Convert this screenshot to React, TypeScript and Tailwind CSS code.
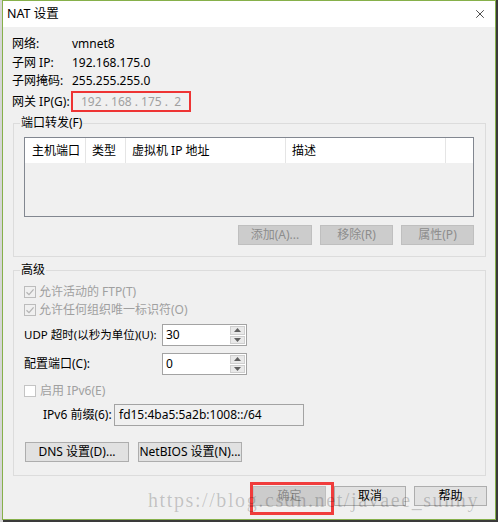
import { X } from "lucide-react";

const font = { fontFamily: '"Noto Sans", "Noto Sans CJK SC", sans-serif' };

function CheckBox({ checked }: { checked?: boolean }) {
  return (
    <span
      className={`w-[12px] h-[12px] border flex items-center justify-center shrink-0 ${
        checked ? "border-[#bcbcbc] bg-[#f0f0f0]" : "border-[#c4c4c4] bg-white"
      }`}
    >
      {checked && (
        <svg width="10" height="10" viewBox="0 0 10 10">
          <path d="M1.5 5.2 L4 7.6 L8.6 2.4" fill="none" stroke="#b4b4b4" strokeWidth="1.3" />
        </svg>
      )}
    </span>
  );
}

function Spin({ value }: { value: string }) {
  return (
    <div className="w-[85px] h-[22px] border border-[#a3a3a3] bg-white flex shrink-0">
      <div className="flex-1 pl-[3px] flex items-center text-black">{value}</div>
      <div className="w-[16px] flex flex-col gap-[1px] p-[1px] pl-0">
        {[0, 1].map((i) => (
          <div
            key={i}
            className="flex-1 bg-[#e9e9e9] border border-[#cfcfcf] flex items-center justify-center"
          >
            <svg width="7" height="4" viewBox="0 0 7 4">
              <path d={i === 0 ? "M0 4 L3.5 0 L7 4 Z" : "M0 0 L3.5 4 L7 0 Z"} fill="#606060" />
            </svg>
          </div>
        ))}
      </div>
    </div>
  );
}

function Btn({
  label,
  disabled,
  w = "w-[73px]",
}: {
  label: string;
  disabled?: boolean;
  w?: string;
}) {
  return (
    <div
      className={`${w} h-[20px] border flex items-center justify-center whitespace-nowrap ${
        disabled
          ? "bg-[#cccccc] border-[#bfbfbf] text-[#8d8d8d]"
          : "bg-[#e1e1e1] border-[#adadad] text-black"
      }`}
    >
      {label}
    </div>
  );
}

export default function App() {
  return (
    <div
      className="w-[498px] h-[522px] bg-[#3a3a3a] relative overflow-hidden text-[12px] leading-none text-black"
      style={font}
    >
      <div className="absolute left-0 top-0 w-[3px] h-[522px] bg-[#d6d6d6]" />
      <div className="relative ml-[2px] w-[494px] h-[520px] border border-[#86b04a] flex flex-col bg-[#f0f0f0]">
        {/* title bar */}
        <div className="h-[26px] bg-white flex items-center justify-between pl-[4px] pr-[8px] shrink-0">
          <span className="text-[12.5px]">NAT 设置</span>
          <X className="w-[14px] h-[14px]" strokeWidth={1.2} />
        </div>

        {/* info */}
        <div className="pl-[9px] pt-[7px] flex flex-col">
          <div className="h-[19px] flex items-center">
            <span className="w-[60px]">网络:</span>
            <span>vmnet8</span>
          </div>
          <div className="h-[19px] flex items-center">
            <span className="w-[60px]">子网 IP:</span>
            <span>192.168.175.0</span>
          </div>
          <div className="h-[18px] flex items-center">
            <span className="w-[60px]">子网掩码:</span>
            <span>255.255.255.0</span>
          </div>
          <div className="mt-[1px] h-[21px] flex items-center">
            <span className="w-[59px] whitespace-nowrap">网关 IP(G):</span>
            <div className="w-[120px] h-[21px] border-2 border-[#ee3434] flex items-center pl-[8px] text-[#a0a0a0] whitespace-pre">
              192 . 168 . 175 .  2
            </div>
          </div>
        </div>

        {/* port forwarding */}
        <fieldset className="ml-[10px] mt-[4px] w-[473px] border border-[#dcdcdc] px-[10px] pb-[11px]">
          <legend className="h-[14px] flex items-center px-[1px] -ml-[4px]">端口转发(F)</legend>
          <div className="mt-[7px] w-[450px] h-[80px] border border-[#828790] bg-[#f0f0f0]">
            <div className="h-[25px] bg-white flex">
              <div className="w-[61px] border-r border-[#e5e5e5] flex items-center pl-[7px]">主机端口</div>
              <div className="w-[40px] border-r border-[#e5e5e5] flex items-center pl-[6px]">类型</div>
              <div className="w-[160px] border-r border-[#e5e5e5] flex items-center pl-[6px]">虚拟机 IP 地址</div>
              <div className="w-[160px] border-r border-[#e5e5e5] flex items-center pl-[6px]">描述</div>
            </div>
          </div>
          <div className="mt-[8px] flex justify-end gap-[8px] w-[450px]">
            <Btn label="添加(A)..." disabled w="w-[74px]" />
            <Btn label="移除(R)" disabled w="w-[73px]" />
            <Btn label="属性(P)" disabled w="w-[73px]" />
          </div>
        </fieldset>

        {/* advanced */}
        <fieldset className="ml-[10px] mt-[6px] w-[473px] border border-[#dcdcdc] px-[10px] pb-[13px]">
          <legend className="h-[14px] flex items-center px-[1px] -ml-[4px]">高级</legend>
          <div className="mt-[6px] h-[18px] flex items-center gap-[3px] text-[#a0a0a0]">
            <CheckBox checked />
            <span>允许活动的 FTP(T)</span>
          </div>
          <div className="h-[18px] flex items-center gap-[3px] text-[#a0a0a0]">
            <CheckBox checked />
            <span>允许任何组织唯一标识符(O)</span>
          </div>
          <div className="mt-[5px] flex items-center">
            <span className="w-[138px] whitespace-nowrap text-[11.5px]">UDP 超时(以秒为单位)(U):</span>
            <Spin value="30" />
          </div>
          <div className="mt-[7px] flex items-center">
            <span className="w-[138px] whitespace-nowrap">配置端口(C):</span>
            <Spin value="0" />
          </div>
          <div className="mt-[7px] h-[18px] flex items-center gap-[4px] text-[#a0a0a0]">
            <CheckBox />
            <span>启用 IPv6(E)</span>
          </div>
          <div className="mt-[4px] flex items-center pl-[19px]">
            <span className="w-[71px] whitespace-nowrap">IPv6 前缀(6):</span>
            <div className="w-[190px] h-[22px] border border-[#a3a3a3] bg-[#f0f0f0] flex items-center pl-[4px]">
              fd15:4ba5:5a2b:1008::/64
            </div>
          </div>
          <div className="mt-[16px] flex gap-[9px] pl-[1px]">
            <Btn label="DNS 设置(D)..." w="w-[104px]" />
            <Btn label="NetBIOS 设置(N)..." w="w-[104px]" />
          </div>
        </fieldset>

        {/* bottom buttons */}
        <div className="mt-[10px] flex justify-end gap-[8px] pr-[8px]">
          <div className="relative">
            <Btn label="确定" disabled />
            <div className="absolute -left-[3px] -top-[4px] -right-[8px] -bottom-[9px] border-[3px] border-[#f03c3c]" />
          </div>
          <Btn label="取消" w="w-[72px]" />
          <Btn label="帮助" />
        </div>

        {/* watermark */}
        <div
          className="absolute left-[145px] top-[489px] text-[20px] tracking-[1.6px] text-black/20 pointer-events-none whitespace-nowrap"
          style={{ fontFamily: '"Liberation Serif", serif' }}
        >
          https://blog.csdn.net/javaee_sunny
        </div>
      </div>
    </div>
  );
}
